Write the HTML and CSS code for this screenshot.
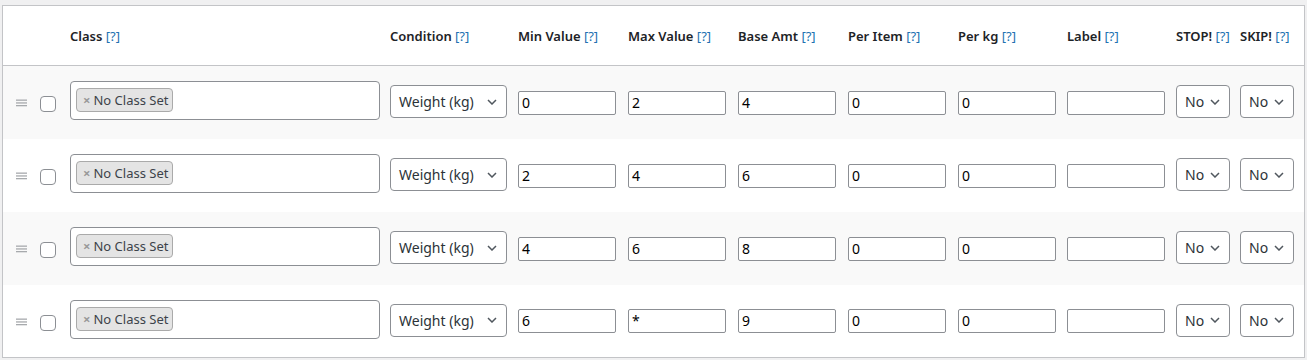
FILE: index.html
```html
<!DOCTYPE html>
<html>
<head>
    <title>Table Rates</title>
    <meta charset="utf-8">
    <link rel="stylesheet" href="styles.css">
</head>
<body>

<div class="rates">
    <div class="row head">
        <div></div>
        <div></div>
        <div>Class <a href="#">[?]</a></div>
        <div>Condition <a href="#">[?]</a></div>
        <div>Min Value <a href="#">[?]</a></div>
        <div>Max Value <a href="#">[?]</a></div>
        <div>Base Amt <a href="#">[?]</a></div>
        <div>Per Item <a href="#">[?]</a></div>
        <div>Per kg <a href="#">[?]</a></div>
        <div>Label <a href="#">[?]</a></div>
        <div>STOP! <a href="#">[?]</a></div>
        <div>SKIP! <a href="#">[?]</a></div>
    </div>

    <div class="row">
        <div class="handle"><svg width="11" height="8" viewBox="0 0 11 8"><rect y="0.5" width="11" height="1.3"/><rect y="3.3" width="11" height="1.3"/><rect y="6" width="11" height="1.3"/></svg></div>
        <div><span class="check"></span></div>
        <div class="classbox"><span class="tag"><b>×</b>No Class Set</span></div>
        <div class="select wide">Weight (kg)<svg width="10" height="6" viewBox="0 0 10 6"><path d="M1 1l4 4 4-4"/></svg></div>
        <div class="field">0</div>
        <div class="field">2</div>
        <div class="field">4</div>
        <div class="field">0</div>
        <div class="field">0</div>
        <div class="field"></div>
        <div class="select">No<svg width="10" height="6" viewBox="0 0 10 6"><path d="M1 1l4 4 4-4"/></svg></div>
        <div class="select">No<svg width="10" height="6" viewBox="0 0 10 6"><path d="M1 1l4 4 4-4"/></svg></div>
    </div>

    <div class="row">
        <div class="handle"><svg width="11" height="8" viewBox="0 0 11 8"><rect y="0.5" width="11" height="1.3"/><rect y="3.3" width="11" height="1.3"/><rect y="6" width="11" height="1.3"/></svg></div>
        <div><span class="check"></span></div>
        <div class="classbox"><span class="tag"><b>×</b>No Class Set</span></div>
        <div class="select wide">Weight (kg)<svg width="10" height="6" viewBox="0 0 10 6"><path d="M1 1l4 4 4-4"/></svg></div>
        <div class="field">2</div>
        <div class="field">4</div>
        <div class="field">6</div>
        <div class="field">0</div>
        <div class="field">0</div>
        <div class="field"></div>
        <div class="select">No<svg width="10" height="6" viewBox="0 0 10 6"><path d="M1 1l4 4 4-4"/></svg></div>
        <div class="select">No<svg width="10" height="6" viewBox="0 0 10 6"><path d="M1 1l4 4 4-4"/></svg></div>
    </div>

    <div class="row">
        <div class="handle"><svg width="11" height="8" viewBox="0 0 11 8"><rect y="0.5" width="11" height="1.3"/><rect y="3.3" width="11" height="1.3"/><rect y="6" width="11" height="1.3"/></svg></div>
        <div><span class="check"></span></div>
        <div class="classbox"><span class="tag"><b>×</b>No Class Set</span></div>
        <div class="select wide">Weight (kg)<svg width="10" height="6" viewBox="0 0 10 6"><path d="M1 1l4 4 4-4"/></svg></div>
        <div class="field">4</div>
        <div class="field">6</div>
        <div class="field">8</div>
        <div class="field">0</div>
        <div class="field">0</div>
        <div class="field"></div>
        <div class="select">No<svg width="10" height="6" viewBox="0 0 10 6"><path d="M1 1l4 4 4-4"/></svg></div>
        <div class="select">No<svg width="10" height="6" viewBox="0 0 10 6"><path d="M1 1l4 4 4-4"/></svg></div>
    </div>

    <div class="row">
        <div class="handle"><svg width="11" height="8" viewBox="0 0 11 8"><rect y="0.5" width="11" height="1.3"/><rect y="3.3" width="11" height="1.3"/><rect y="6" width="11" height="1.3"/></svg></div>
        <div><span class="check"></span></div>
        <div class="classbox"><span class="tag"><b>×</b>No Class Set</span></div>
        <div class="select wide">Weight (kg)<svg width="10" height="6" viewBox="0 0 10 6"><path d="M1 1l4 4 4-4"/></svg></div>
        <div class="field">6</div>
        <div class="field">*</div>
        <div class="field">9</div>
        <div class="field">0</div>
        <div class="field">0</div>
        <div class="field"></div>
        <div class="select">No<svg width="10" height="6" viewBox="0 0 10 6"><path d="M1 1l4 4 4-4"/></svg></div>
        <div class="select">No<svg width="10" height="6" viewBox="0 0 10 6"><path d="M1 1l4 4 4-4"/></svg></div>
    </div>
</div>

</body>
</html>
```

FILE: styles.css
```css
body {
    margin: 0px;
    background-color: #f0f0f1;
    font: 13px "Noto Sans", sans-serif;
    color: #2c3338;
}

.rates {
    margin: 5px 2px 0px 2px;
    border: 1px solid #c3c4c7;
    background-color: #fff;
}

.row {
    display: grid;
    grid-template-columns: 24px 30px 320px 128px 110px 110px 110px 110px 109px 109px 64px 1fr;
    align-items: center;
    padding-left: 13px;
    height: 73px;
}

.row:nth-child(even) {
    background-color: #f9f9f9;
}

.row:last-child {
    height: 72px;
}

.head {
    height: 59px;
    border-bottom: 1px solid #c3c4c7;
    font-weight: 600;
    color: #1d2327;
}

.head a {
    color: #2271b1;
    text-decoration: none;
    font-weight: 400;
}

.handle svg {
    display: block;
    fill: #a7aaad;
    margin-top: 1px;
}

.check {
    display: block;
    width: 16px;
    height: 16px;
    box-sizing: border-box;
    border: 1px solid #8c8f94;
    border-radius: 4px;
    background-color: #fff;
    margin-top: 3px;
}

.classbox {
    width: 310px;
    height: 39px;
    box-sizing: border-box;
    border: 1px solid #8c8f94;
    border-radius: 4px;
    background-color: #fff;
    margin-bottom: 4px;
    display: flex;
    align-items: flex-start;
    padding-left: 5px;
}

.tag {
    margin-top: 6px;
    height: 22px;
    line-height: 22px;
    padding: 0px 4px 0px 6px;
    background-color: #e4e4e4;
    border: 1px solid #aaa;
    border-radius: 4px;
    color: #3c434a;
}

.tag b {
    color: #999;
    font-weight: bold;
    margin-right: 3px;
}

.select {
    width: 54px;
    height: 33px;
    box-sizing: border-box;
    border: 1px solid #8c8f94;
    border-radius: 4px;
    background-color: #fff;
    display: flex;
    align-items: center;
    justify-content: space-between;
    padding: 0px 9px 0px 8px;
    margin-bottom: 2px;
    font-size: 14px;
    color: #2c3338;
}

.select.wide {
    width: 117px;
}

.select svg {
    fill: none;
    stroke: #50575e;
    stroke-width: 1.5;
}

.field {
    width: 98px;
    height: 24px;
    box-sizing: border-box;
    border: 1px solid #8c8f94;
    border-radius: 2px;
    background-color: #fff;
    padding-left: 3px;
    line-height: 22px;
    font-size: 14px;
    color: #000;
}
```
